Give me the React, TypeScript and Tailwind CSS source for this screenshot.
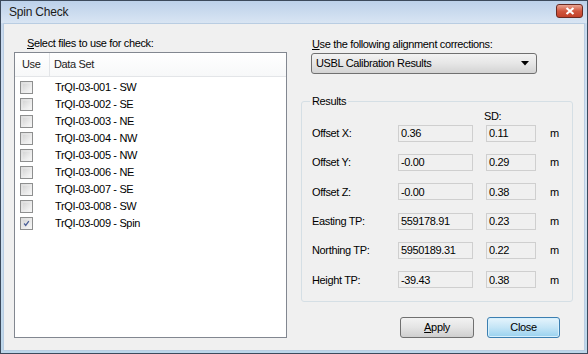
import { useState } from "react"

const files = [
  "TrQI-03-001 - SW",
  "TrQI-03-002 - SE",
  "TrQI-03-003 - NE",
  "TrQI-03-004 - NW",
  "TrQI-03-005 - NW",
  "TrQI-03-006 - NE",
  "TrQI-03-007 - SE",
  "TrQI-03-008 - SW",
  "TrQI-03-009 - Spin",
]

const results = [
  { label: "Offset X:", value: "0.36", sd: "0.11" },
  { label: "Offset Y:", value: "-0.00", sd: "0.29" },
  { label: "Offset Z:", value: "-0.00", sd: "0.38" },
  { label: "Easting TP:", value: "559178.91", sd: "0.23" },
  { label: "Northing TP:", value: "5950189.31", sd: "0.22" },
  { label: "Height TP:", value: "-39.43", sd: "0.38" },
]

function CheckBox({ checked, onChange }: { checked: boolean; onChange: () => void }) {
  return (
    <button
      onClick={onChange}
      className="w-[13px] h-[13px] border border-[#8e8f8f] bg-gradient-to-br from-[#dcdcdc] to-[#f6f6f6] p-[2px] flex items-center justify-center"
    >
      <span className="w-full h-full bg-gradient-to-br from-[#d6d6d6] to-[#f4f4f4] flex items-center justify-center">
        {checked && (
          <svg width="9" height="9" viewBox="0 0 9 9">
            <path d="M1.5 4.5 L3.5 7 L7.5 1.5" stroke="#4a5f97" strokeWidth="1.6" fill="none" />
          </svg>
        )}
      </span>
    </button>
  )
}

export default function App() {
  const [checked, setChecked] = useState<boolean[]>(files.map((_, i) => i === 8))

  const toggle = (i: number) => setChecked(c => c.map((v, j) => (j === i ? !v : v)))

  return (
    <div
      className="w-[588px] h-[354px] border border-[#3c4a5c] bg-gradient-to-b from-[#c6d8ee] via-[#d7e4f3] to-[#bcd6ea] flex flex-col text-[11px] text-black tracking-[-0.35px]"
      style={{ fontFamily: '"Liberation Sans", Arial, sans-serif' }}
    >
      {/* title bar */}
      <div className="h-[22px] flex items-center justify-between pl-[8px] pr-[4px] bg-gradient-to-b from-[#bcd1ea] to-[#d9e5f3]">
        <span className="text-[12px] tracking-[-0.2px] text-[#1a1a1a]">Spin Check</span>
        <button className="w-[27px] h-[14px] mt-[-3px] rounded-[3px] border border-[#6b2a22] bg-gradient-to-b from-[#e8a493] via-[#d0573f] to-[#c2412a] flex items-center justify-center">
          <svg width="10" height="8" viewBox="0 0 10 8">
            <path d="M1.5 1 L8.5 7 M8.5 1 L1.5 7" stroke="#ffffff" strokeWidth="2.2" />
          </svg>
        </button>
      </div>

      {/* client area */}
      <div className="flex-1 mx-[2px] mb-[2px] bg-[#f0f0f0] border border-[#b9cde2] flex pt-[13px] pl-[10px]">
        {/* left */}
        <div className="w-[273px] flex flex-col">
          <div className="h-[13px] leading-[13px] pl-[13px]">
            <span className="underline">S</span>elect files to use for check:
          </div>
          <div className="mt-[2px] h-[286px] border border-[#828790] bg-white flex flex-col">
            <div className="h-[24px] flex items-center border-b border-[#e3e5e8] bg-gradient-to-b from-white to-[#f7f8f9] text-[#222]">
              <div className="w-[35px] h-full flex items-center pl-[7px] border-r border-[#e3e5e8]">Use</div>
              <div className="pl-[4px]">Data Set</div>
            </div>
            <div className="pt-[2px] flex flex-col">
              {files.map((f, i) => (
                <div key={f} className="h-[17px] flex items-center">
                  <div className="w-[40px] pl-[5px] flex items-center">
                    <CheckBox checked={checked[i]} onChange={() => toggle(i)} />
                  </div>
                  <span>{f}</span>
                </div>
              ))}
            </div>
          </div>
        </div>

        {/* right */}
        <div className="ml-[14px] w-[272px] flex flex-col">
          <div className="h-[13px] leading-[13px] pl-[11px] mt-[1px]">
            <span className="underline">U</span>se the following alignment corrections:
          </div>
          <button className="mt-[2px] ml-[10px] w-[226px] h-[21px] rounded-[3px] border border-[#707070] bg-gradient-to-b from-[#f3f3f3] via-[#e6e6e6] to-[#d3d3d3] flex items-center justify-between pl-[4px] pr-[7px]">
            <span>USBL Calibration Results</span>
            <svg width="8" height="5" viewBox="0 0 8 5">
              <path d="M0 0 H8 L4 4.5 Z" fill="#000" />
            </svg>
          </button>

          <fieldset className="mt-[21px] border border-[#d5dfe5] rounded-[3px] px-[10px] pb-[11px]">
            <legend className="ml-[-2px] px-[2px] leading-[13px]">Results</legend>
            <div className="h-[13px] leading-[13px] pl-[172px] mt-[2px]">SD:</div>
            <div className="flex flex-col gap-[9.4px]">
              {results.map(r => (
                <div key={r.label} className="h-[20px] flex items-center">
                  <span className="w-[86px]">{r.label}</span>
                  <div className="w-[75px] h-[17px] border border-[#cfcfcf] bg-[#f0f0f0] flex items-center pl-[2px]">{r.value}</div>
                  <div className="ml-[13px] w-[50px] h-[17px] border border-[#cfcfcf] bg-[#f0f0f0] flex items-center pl-[2px]">{r.sd}</div>
                  <span className="ml-[14px]">m</span>
                </div>
              ))}
            </div>
          </fieldset>

          <div className="mt-[15px] flex justify-end gap-[13px] pr-[13px]">
            <button className="w-[74px] h-[21px] rounded-[3px] border border-[#707070] bg-gradient-to-b from-[#f2f2f2] via-[#e4e4e4] to-[#cfcfcf]">
              <span className="underline">A</span>pply
            </button>
            <button className="w-[73px] h-[21px] rounded-[3px] border border-[#3c7fb1] bg-gradient-to-b from-[#e5f4fc] via-[#c4e5f6] to-[#98d1ef] shadow-[inset_0_0_0_1px_#d7f0fd]">
              Close
            </button>
          </div>
        </div>
      </div>
    </div>
  )
}
